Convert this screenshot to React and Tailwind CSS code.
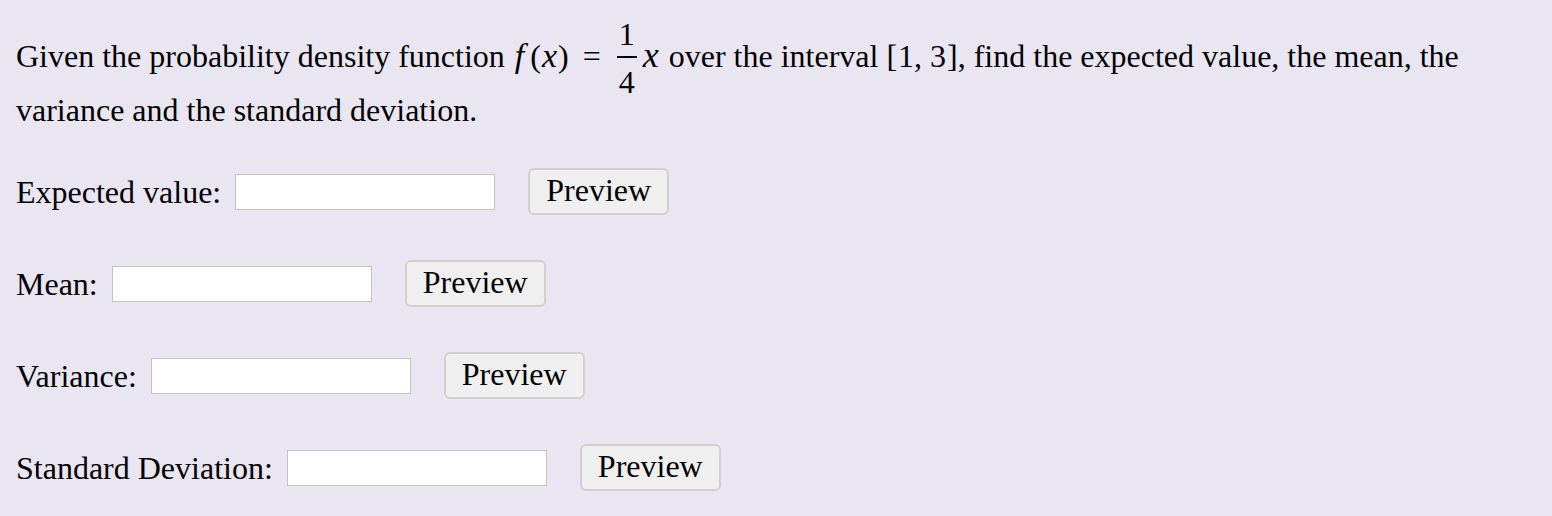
import React from 'react';

function Frac({ top, bottom }) {
    return (
        <span className="inline-flex flex-col items-center align-[22px] my-[-16px] mx-[16px] leading-none text-[32px]">
            <span className="px-[2px] pb-[6px]">{top}</span>
            <span className="block w-full h-[2px] bg-black"></span>
            <span className="px-[2px] pt-[8px]">{bottom}</span>
        </span>
    );
}

function Field({ label }) {
    return (
        <div className="flex items-center h-[47px]">
            <span>{label}</span>
            <input type="text" className="ml-[14px] w-[260px] h-[36px] bg-white border border-[#c4c4c4] outline-none" />
            <button className="ml-[33px] h-[47px] px-[16px] pb-[4px] leading-none bg-[#efefef] border-2 border-[#d0d0d0] rounded-[6px] text-black">
                Preview
            </button>
        </div>
    );
}

export default function App() {
    return (
        <div className="min-h-[516px] bg-[#e9e6f1] text-black px-[16px] pt-[28px] text-[32px]" style={{ fontFamily: '"Liberation Serif", "Times New Roman", serif' }}>
            <p className="leading-[54px]">
                Given the probability density function{' '}
                <i className="ml-[2px] text-[34px]">f</i>
                <span className="ml-[6px]">(</span>
                <i className="text-[34px] px-[1px]">x</i>
                <span>)</span>
                <span className="ml-[14px]">=</span>
                <Frac top="1" bottom="4" />
                <i className="text-[36px] ml-[-10px] mr-[2px]">x</i> over the interval{' '}
                <span className="mr-[1px]">[</span>1, 3<span className="ml-[1px]">]</span>, find the expected value, the mean, the variance and the standard deviation.
            </p>

            <div className="flex flex-col gap-[45px] mt-[31px]">
                <Field label="Expected value:" />
                <Field label="Mean:" />
                <Field label="Variance:" />
                <Field label="Standard Deviation:" />
            </div>
        </div>
    );
}
